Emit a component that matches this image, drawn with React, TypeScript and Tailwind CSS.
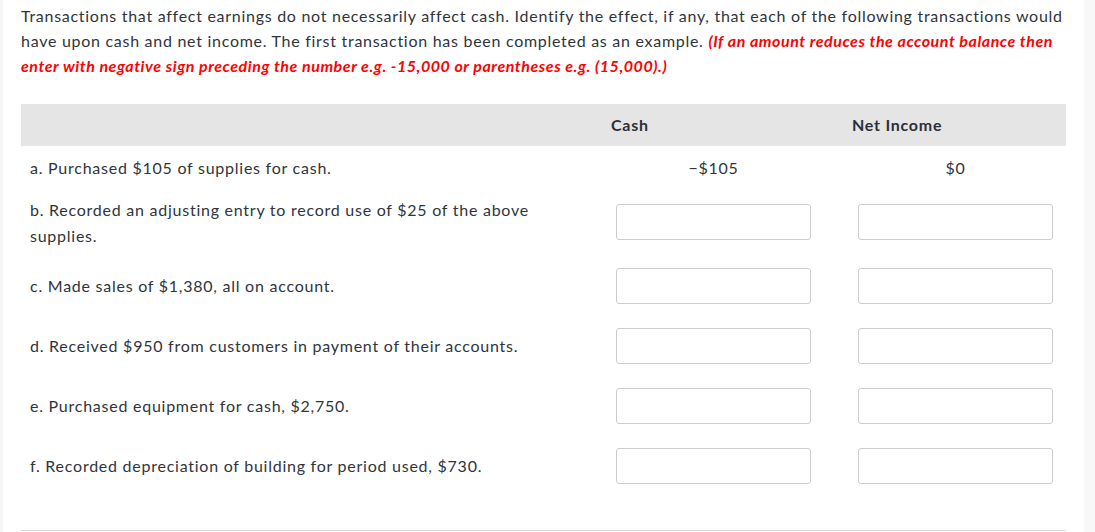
import React from 'react';

interface Row {
  id: string;
  text: string;
  cash?: string;
  net?: string;
}

const rows: Row[] = [
  { id: 'a', text: 'a. Purchased $105 of supplies for cash.', cash: '\u2212$105', net: '$0' },
  { id: 'b', text: 'b. Recorded an adjusting entry to record use of $25 of the above supplies.' },
  { id: 'c', text: 'c. Made sales of $1,380, all on account.' },
  { id: 'd', text: 'd. Received $950 from customers in payment of their accounts.' },
  { id: 'e', text: 'e. Purchased equipment for cash, $2,750.' },
  { id: 'f', text: 'f. Recorded depreciation of building for period used, $730.' },
];

function AmountInput() {
  return (
    <input
      type="text"
      className="h-[36px] w-[195px] rounded-[3px] border border-[#cdcdcd] bg-white px-2 outline-none"
    />
  );
}

export default function App() {
  return (
    <div
      className="flex h-[532px] w-[1095px] overflow-hidden bg-white text-[16px] tracking-[0.75px] text-[#2f353d]"
      style={{ fontFamily: 'Lato, "Open Sans", sans-serif' }}
    >
      <div className="w-[3px] shrink-0 bg-[#f7f7f7]"></div>
      <div className="flex w-[1081px] flex-col px-[18px]">
        <p className="pt-[3px] leading-[25px] tracking-[0.72px]">
          Transactions that affect earnings do not necessarily affect cash. Identify the effect, if any, that each of the
          following transactions would have upon cash and net income. The first transaction has been completed as an
          example.{' '}
          <span className="font-bold italic tracking-[0.55px] text-[#ff0000]">
            (If an amount reduces the account balance then enter with negative sign preceding the number e.g. -15,000 or
            parentheses e.g. (15,000).)
          </span>
        </p>

        <div className="mt-[26px] flex h-[42px] items-center bg-[#e5e5e5] font-bold text-[#2b3036]">
          <div className="w-[579px]"></div>
          <div className="w-[226px] pl-[11px]">Cash</div>
          <div className="w-[240px] pl-[26px]">Net Income</div>
        </div>

        {rows.map((row) => {
          if (row.id === 'a') {
            return (
              <div key={row.id} className="flex h-[44px] items-center">
                <div className="w-[579px] pl-[9px]">{row.text}</div>
                <div className="w-[226px] pl-[16px]">
                  <div className="w-[195px] text-center">{row.cash}</div>
                </div>
                <div className="w-[240px] pl-[32px]">
                  <div className="w-[195px] text-center">{row.net}</div>
                </div>
              </div>
            );
          }
          if (row.id === 'b') {
            return (
              <div key={row.id} className="flex h-[66px] items-start">
                <div className="w-[579px] pl-[9px] pt-[7px]">
                  <div className="w-[545px] leading-[26px]">{row.text}</div>
                </div>
                <div className="w-[226px] pl-[16px] pt-[14px]">
                  <AmountInput />
                </div>
                <div className="w-[240px] pl-[32px] pt-[14px]">
                  <AmountInput />
                </div>
              </div>
            );
          }
          return (
            <div key={row.id} className="flex h-[60px] items-center">
              <div className="w-[579px] pl-[9px]">{row.text}</div>
              <div className="w-[226px] pl-[16px]">
                <AmountInput />
              </div>
              <div className="w-[240px] pl-[32px]">
                <AmountInput />
              </div>
            </div>
          );
        })}

        <div className="mt-[34px] border-t border-[#dadada]"></div>
      </div>
      <div className="w-[11px] shrink-0 bg-[#f8f8f8]"></div>
    </div>
  );
}
